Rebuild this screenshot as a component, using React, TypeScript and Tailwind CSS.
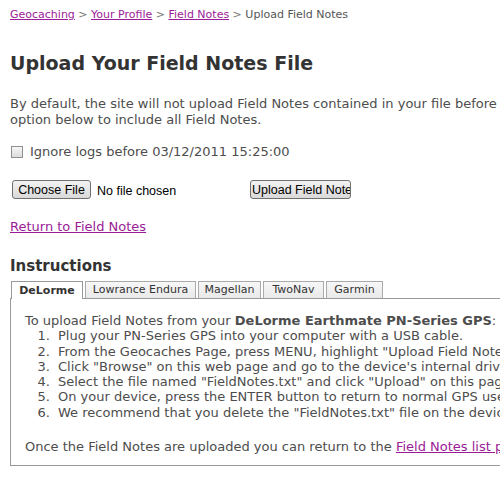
import { useState } from "react";

// tab labels with their fixed widths on the strip
const tabs: [string, string][] = [
  ["DeLorme", "w-[72px]"],
  ["Lowrance Endura", "w-[111px]"],
  ["Magellan", "w-[63px]"],
  ["TwoNav", "w-[61px]"],
  ["Garmin", "w-[57px]"],
];

const steps = [
  "Plug your PN-Series GPS into your computer with a USB cable.",
  'From the Geocaches Page, press MENU, highlight "Upload Field Notes" and press ENTER.',
  'Click "Browse" on this web page and go to the device\'s internal drive.',
  'Select the file named "FieldNotes.txt" and click "Upload" on this page.',
  "On your device, press the ENTER button to return to normal GPS use.",
  'We recommend that you delete the "FieldNotes.txt" file on the device.',
];

function Crumbs() {
  return (
    <div className="text-[11px] text-[#555] leading-[16px]">
      <a className="text-[#9a1c96] underline">Geocaching</a>
      <span className="text-[#777]"> &gt; </span>
      <a className="text-[#9a1c96] underline">Your Profile</a>
      <span className="text-[#777]"> &gt; </span>
      <a className="text-[#9a1c96] underline">Field Notes</a>
      <span className="text-[#777]"> &gt; </span>
      Upload Field Notes
    </div>
  );
}

export default function App() {
  const [active, setActive] = useState(0);
  const [ignore, setIgnore] = useState(false);

  return (
    <div className="w-[500px] h-[480px] overflow-hidden bg-white">
      <div
        className="w-[640px] pl-[10px] pt-[7px] text-[#4d4d4d]"
        style={{ fontFamily: '"DejaVu Sans", Verdana, sans-serif' }}
      >
        <Crumbs />

        <h1 className="mt-[28px] text-[19px] font-bold text-[#333] leading-[24px]">
          Upload Your Field Notes File
        </h1>

        <p className="mt-[21px] text-[13px] leading-[16px] whitespace-nowrap">
          By default, the site will not upload Field Notes contained in your file before{" "}
          <b>03/12/2011 15:25:00</b>. Check the
          <br />
          option below to include all Field Notes.
        </p>

        {/* ignore-date option */}
        <label className="mt-[16px] flex items-center h-[16px] text-[13px] leading-[16px]">
          <input
            type="checkbox"
            checked={ignore}
            onChange={(e) => setIgnore(e.target.checked)}
            className="ml-[1px] w-[12px] h-[12px] m-0 appearance-none border border-[#8f8f8f] bg-gradient-to-b from-[#f6f6f6] to-[#dcdcdc]"
          />
          <span className="ml-[7px]">Ignore logs before 03/12/2011 15:25:00</span>
        </label>

        {/* file + upload */}
        <div
          className="mt-[20px] flex items-center h-[19px] text-[12.5px] text-black"
          style={{ fontFamily: '"Liberation Sans", Arial, sans-serif' }}
        >
          <button className="ml-[2px] h-[19px] w-[79px] border border-[#707070] rounded-[3px] bg-gradient-to-b from-[#f3f3f3] to-[#d9d9d9] leading-[16px]">
            Choose File
          </button>
          <span className="ml-[6px] w-[153px] mt-[3px]">No file chosen</span>
          <button className="h-[19px] w-[101px] overflow-hidden whitespace-nowrap text-left pl-[1px] border border-[#707070] rounded-[3px] bg-gradient-to-b from-[#f3f3f3] to-[#d9d9d9] leading-[16px]">
            Upload Field Notes
          </button>
        </div>

        <a className="mt-[20px] block text-[13px] leading-[16px] text-[#9a1c96] underline">
          Return to Field Notes
        </a>

        <h2 className="mt-[21px] text-[15px] font-bold text-[#333] leading-[20px]">
          Instructions
        </h2>

        {/* tab strip */}
        <div className="mt-[5px] flex items-end gap-[2px] pl-[1px] text-[11px] text-[#333]">
          {tabs.map(([t, w], i) => (
            <button
              key={t}
              onClick={() => setActive(i)}
              className={
                i === active
                  ? `${w} h-[18px] -mb-px border border-b-0 border-[#999] bg-white font-bold leading-[17px] relative z-10`
                  : `${w} h-[17px] border border-b-0 border-[#aaa] bg-gradient-to-b from-[#f7f7f7] to-[#e9e9e9] leading-[16px]`
              }
            >
              {t}
            </button>
          ))}
        </div>

        <div className="border border-[#999] pt-[14px] pl-[14px] pb-[11px] text-[13px] leading-[15.3px]">
          <div className="whitespace-nowrap">
            To upload Field Notes from your <b>DeLorme Earthmate PN-Series GPS</b>:
          </div>
          <ol className="whitespace-nowrap">
            {steps.map((s, i) => (
              <li key={i} className="flex">
                <span className="w-[33px] shrink-0 text-right pr-[8px]">{i + 1}.</span>
                {s}
              </li>
            ))}
          </ol>
          <div className="mt-[19px] whitespace-nowrap">
            Once the Field Notes are uploaded you can return to the{" "}
            <a className="text-[#9a1c96] underline">Field Notes list page</a>.
          </div>
        </div>
      </div>
    </div>
  );
}
